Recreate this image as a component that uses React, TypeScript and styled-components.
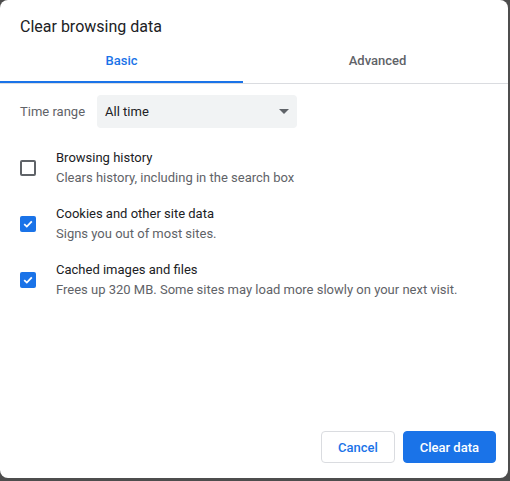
import React, { useState } from 'react';
import styled, { createGlobalStyle } from 'styled-components';

const GlobalStyle = createGlobalStyle`
  html, body {
    margin: 0;
    padding: 0;
    background: #4d4d4d;
  }
  body {
    font-family: Roboto, "Liberation Sans", Arial, sans-serif;
    -webkit-font-smoothing: antialiased;
  }
`;

const Dialog = styled.div`
  width: 508px;
  height: 478px;
  background: #ffffff;
  border-radius: 8px;
  display: flex;
  flex-direction: column;
  overflow: hidden;
`;

const Title = styled.h1`
  margin: 0;
  padding: 17px 20px 0;
  font-size: 16px;
  line-height: 20px;
  font-weight: 400;
  color: #202124;
`;

const TabBar = styled.div`
  display: flex;
  margin-top: 2px;
  border-bottom: 1px solid #dadce0;
`;

const Tab = styled.button<{ $active: boolean; $grow?: boolean }>`
  position: relative;
  height: 44px;
  border: none;
  background: none;
  padding: 0;
  padding-left: ${p => (p.$grow ? '4px' : '0')};
  flex: ${p => (p.$grow ? '1' : '0 0 243px')};
  font-family: inherit;
  font-size: 13px;
  line-height: 16px;
  font-weight: 500;
  color: ${p => (p.$active ? '#1a73e8' : '#5f6368')};
  cursor: pointer;

  &::after {
    content: '';
    display: ${p => (p.$active ? 'block' : 'none')};
    position: absolute;
    left: 0;
    right: 0;
    bottom: 0;
    height: 2px;
    background: #1a73e8;
  }
`;

const Body = styled.div`
  flex: 1;
  padding: 11px 20px 0;
`;

const RangeRow = styled.div`
  display: flex;
  align-items: center;
  gap: 12px;
  margin-bottom: 12px;
`;

const RangeLabel = styled.span`
  font-size: 13px;
  color: #5f6368;
`;

const Select = styled.div`
  width: 200px;
  height: 33px;
  box-sizing: border-box;
  padding: 0 8px;
  background: #f1f3f4;
  border-radius: 4px;
  display: flex;
  align-items: center;
  justify-content: space-between;
  font-size: 13px;
  color: #202124;
`;

const Option = styled.label`
  display: flex;
  align-items: center;
  gap: 20px;
  padding: 8px 0;
  cursor: pointer;
`;

const Box = styled.span<{ $checked: boolean }>`
  width: 16px;
  height: 16px;
  box-sizing: border-box;
  border-radius: 2px;
  flex: none;
  display: flex;
  align-items: center;
  justify-content: center;
  border: ${p => (p.$checked ? 'none' : '2px solid #5f6368')};
  background: ${p => (p.$checked ? '#1a73e8' : 'transparent')};
`;

const OptionText = styled.div`
  display: flex;
  flex-direction: column;
  font-size: 13px;
  line-height: 20px;
`;

const OptionTitle = styled.span`
  color: #202124;
`;

const OptionSub = styled.span`
  color: #5f6368;
`;

const Footer = styled.div`
  display: flex;
  justify-content: flex-end;
  gap: 8px;
  padding: 0 12px 15px 0;
`;

const Button = styled.button<{ $primary?: boolean }>`
  height: 32px;
  padding: 0 16px;
  border-radius: 4px;
  font-family: inherit;
  font-size: 13px;
  font-weight: 500;
  cursor: pointer;
  box-sizing: border-box;
  border: 1px solid ${p => (p.$primary ? '#1a73e8' : '#dadce0')};
  background: ${p => (p.$primary ? '#1a73e8' : '#ffffff')};
  color: ${p => (p.$primary ? '#ffffff' : '#1a73e8')};
`;

const options = [
  { title: 'Browsing history', sub: 'Clears history, including in the search box', checked: false },
  { title: 'Cookies and other site data', sub: 'Signs you out of most sites.', checked: true },
  { title: 'Cached images and files', sub: 'Frees up 320 MB. Some sites may load more slowly on your next visit.', checked: true },
];

const Check = () => (
  <svg width="12" height="12" viewBox="0 0 12 12">
    <path d="M2.2 6.2 L4.8 8.6 L9.8 3.4" fill="none" stroke="#ffffff" strokeWidth="1.8" />
  </svg>
);

export default function App() {
  const [tab, setTab] = useState(0);
  const [checks, setChecks] = useState(options.map(o => o.checked));

  const toggle = (i: number) => {
    setChecks(checks.map((c, j) => (j === i ? !c : c)));
  };

  return (
    <>
      <GlobalStyle />
      <Dialog>
        <Title>Clear browsing data</Title>
        <TabBar>
          <Tab $active={tab === 0} onClick={() => setTab(0)}>Basic</Tab>
          <Tab $active={tab === 1} $grow onClick={() => setTab(1)}>Advanced</Tab>
        </TabBar>
        <Body>
          <RangeRow>
            <RangeLabel>Time range</RangeLabel>
            <Select>
              All time
              <svg width="10" height="5" viewBox="0 0 10 5">
                <polygon points="0,0 10,0 5,5" fill="#5f6368" />
              </svg>
            </Select>
          </RangeRow>
          {options.map((o, i) => (
            <Option key={o.title} onClick={() => toggle(i)}>
              <Box $checked={checks[i]}>{checks[i] && <Check />}</Box>
              <OptionText>
                <OptionTitle>{o.title}</OptionTitle>
                <OptionSub>{o.sub}</OptionSub>
              </OptionText>
            </Option>
          ))}
        </Body>
        <Footer>
          <Button>Cancel</Button>
          <Button $primary>Clear data</Button>
        </Footer>
      </Dialog>
    </>
  );
}
